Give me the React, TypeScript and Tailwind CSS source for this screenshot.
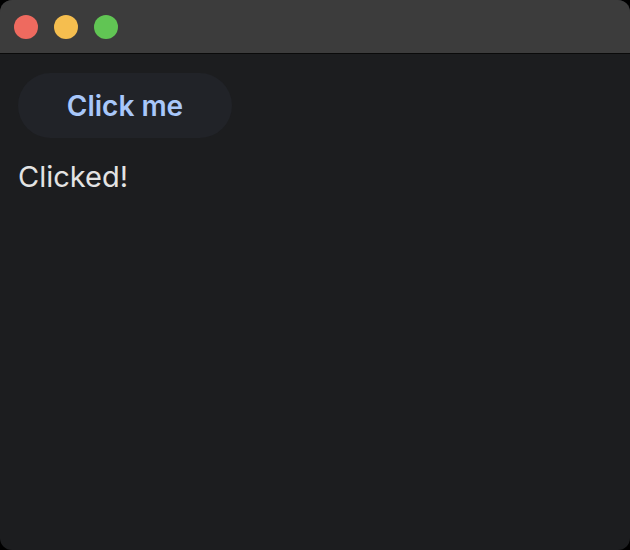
export default function App() {
  return (
    <div className="w-[630px] h-[550px] bg-black">
      <div className="flex flex-col w-full h-full rounded-[12px] overflow-hidden bg-[#1c1d1f] font-['Inter',sans-serif]">
        {/* Title bar */}
        <div className="flex items-center gap-4 h-[54px] px-[14px] bg-[#3c3c3c] border-b border-[#0a0a0a] shrink-0">
          <span className="w-6 h-6 rounded-full bg-[#ee6a5f]" />
          <span className="w-6 h-6 rounded-full bg-[#f5be4f]" />
          <span className="w-6 h-6 rounded-full bg-[#61c554]" />
        </div>

        {/* Content */}
        <div className="flex flex-col items-start px-[18px] pt-[19px]">
          <button className="w-[214px] h-[65px] rounded-full bg-[#212328] text-[#a8c7fa] text-[28px] font-semibold leading-none">
            Click me
          </button>
          <p className="mt-[22px] text-[29px] text-[#e3e3e3] leading-[34px]">Clicked!</p>
        </div>
      </div>
    </div>
  );
}
